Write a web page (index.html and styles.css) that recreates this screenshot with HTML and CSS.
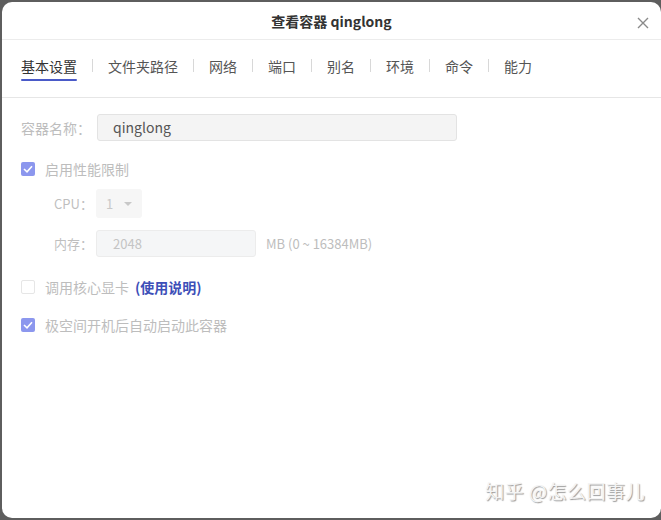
FILE: index.html
```html
<!DOCTYPE html>
<html lang="zh-CN">
<head>
	<meta charset="UTF-8">
	<title>查看容器 qinglong</title>
	<link rel="stylesheet" href="styles.css">
</head>
<body>
	<div class="dialog">
		<div class="dialog-header">
			<span class="dialog-title">查看容器 qinglong</span>
			<span class="dialog-close">
				<svg width="12" height="12" viewBox="0 0 12 12"><path d="M1 1L11 11M11 1L1 11" stroke="#8a8a8a" stroke-width="1.4" fill="none"/></svg>
			</span>
		</div>
		<div class="tabs">
			<span class="tab active">基本设置</span>
			<span class="tab-sep"></span>
			<span class="tab">文件夹路径</span>
			<span class="tab-sep"></span>
			<span class="tab">网络</span>
			<span class="tab-sep"></span>
			<span class="tab">端口</span>
			<span class="tab-sep"></span>
			<span class="tab">别名</span>
			<span class="tab-sep"></span>
			<span class="tab">环境</span>
			<span class="tab-sep"></span>
			<span class="tab">命令</span>
			<span class="tab-sep"></span>
			<span class="tab">能力</span>
		</div>
		<div class="dialog-body">
			<div class="row name-row">
				<label class="row-label">容器名称：</label>
				<div class="input input-name">qinglong</div>
			</div>
			<div class="check-row">
				<span class="checkbox checked"><svg width="10" height="8" viewBox="0 0 10 8"><path d="M1 4L4 6.8L9 1.2" stroke="#fff" stroke-width="1.6" fill="none"/></svg></span>
				<span>启用性能限制</span>
			</div>
			<div class="sub">
				<div class="row">
					<label class="sub-label">CPU：</label>
					<div class="select">1<span class="caret"></span></div>
				</div>
				<div class="row">
					<label class="sub-label">内存：</label>
					<div class="input input-mem">2048</div>
					<span class="unit">MB (0 ~ 16384MB)</span>
				</div>
			</div>
			<div class="check-row">
				<span class="checkbox"></span>
				<span>调用核心显卡</span>
				<a href="" class="help">(使用说明)</a>
			</div>
			<div class="check-row">
				<span class="checkbox checked"><svg width="10" height="8" viewBox="0 0 10 8"><path d="M1 4L4 6.8L9 1.2" stroke="#fff" stroke-width="1.6" fill="none"/></svg></span>
				<span>极空间开机后自动启动此容器</span>
			</div>
		</div>
		<div class="watermark">知乎 @怎么回事儿</div>
	</div>
</body>
</html>
```
FILE: styles.css
```css
/* reset */
* {
	margin: 0;
	padding: 0;
	box-sizing: border-box;
}
body {
	font-family: "Microsoft YaHei", "Noto Sans CJK SC", "Liberation Sans", sans-serif;
	background: #5e5e5e;
	padding: 2px 0 2px 2px;
	height: 520px;
	overflow: hidden;
}
.dialog {
	position: relative;
	height: 516px;
	background: #fff;
	border-radius: 10px;
}
.dialog-header {
	position: relative;
	height: 38px;
	border-bottom: 1px solid #ececec;
	text-align: center;
}
.dialog-title {
	display: inline-block;
	line-height: 38px;
	font-size: 14px;
	font-weight: bold;
	color: #333;
}
.dialog-close {
	position: absolute;
	right: 12px;
	top: 15px;
	line-height: 0;
}
.tabs {
	display: flex;
	align-items: center;
	height: 58px;
	padding: 0 0 6px 19px;
	border-bottom: 1px solid #e6e6e6;
}
.tab {
	position: relative;
	font-size: 14px;
	color: #555;
	line-height: 20px;
}
.tab.active {
	color: #333;
}
.tab.active:after {
	content: "";
	position: absolute;
	left: 0;
	right: 0;
	bottom: -5px;
	height: 2px;
	background: #4a5ac8;
	border-radius: 1px;
}
.tab-sep {
	width: 1px;
	height: 13px;
	margin: 0 15px;
	background: #d8d8d8;
}
.dialog-body {
	padding: 16px 19px 0;
	font-size: 14px;
	color: #bdbdbd;
}
.row {
	display: flex;
	align-items: center;
}
.row-label {
	width: 76px;
}
.input {
	height: 27px;
	line-height: 25px;
	padding-left: 16px;
	border: 1px solid #e3e3e3;
	border-radius: 3px;
	background: #f4f4f4;
}
.input-name {
	width: 360px;
	padding-left: 15px;
	color: #555;
}
.check-row {
	display: flex;
	align-items: center;
	height: 20px;
	margin-top: 18px;
}
.checkbox {
	display: flex;
	align-items: center;
	justify-content: center;
	width: 14px;
	height: 14px;
	margin-right: 10px;
	border: 1px solid #e6e6e6;
	border-radius: 2px;
}
.checkbox.checked {
	border: none;
	background: #8c97ee;
}
.help {
	margin-left: 6px;
	font-weight: bold;
	color: #3d4fb8;
	text-decoration: none;
}
.sub {
	padding: 10px 0 1px 33px;
	font-size: 13px;
}
.sub .row + .row {
	margin-top: 12px;
}
.sub-label {
	width: 42px;
	color: #bfbfbf;
}
.select {
	display: flex;
	align-items: center;
	width: 46px;
	height: 29px;
	padding-left: 10px;
	border-radius: 3px;
	background: #f6f6f6;
	color: #c8c8c8;
}
.caret {
	margin-left: 11px;
	border-left: 4px solid transparent;
	border-right: 4px solid transparent;
	border-top: 4px solid #c8c8c8;
}
.input-mem {
	width: 160px;
	border-color: #ececec;
	background: #f5f6f7;
	color: #c4c4c4;
}
.unit {
	margin-left: 10px;
	color: #bdbdbd;
}
.sub + .check-row {
	margin-top: 19px;
}
.watermark {
	position: absolute;
	right: 16px;
	bottom: 14px;
	font-size: 19px;
	color: #f4f4f4;
	text-shadow: 1px 1px 1px #9a9a9a;
	letter-spacing: 0.5px;
}
```
